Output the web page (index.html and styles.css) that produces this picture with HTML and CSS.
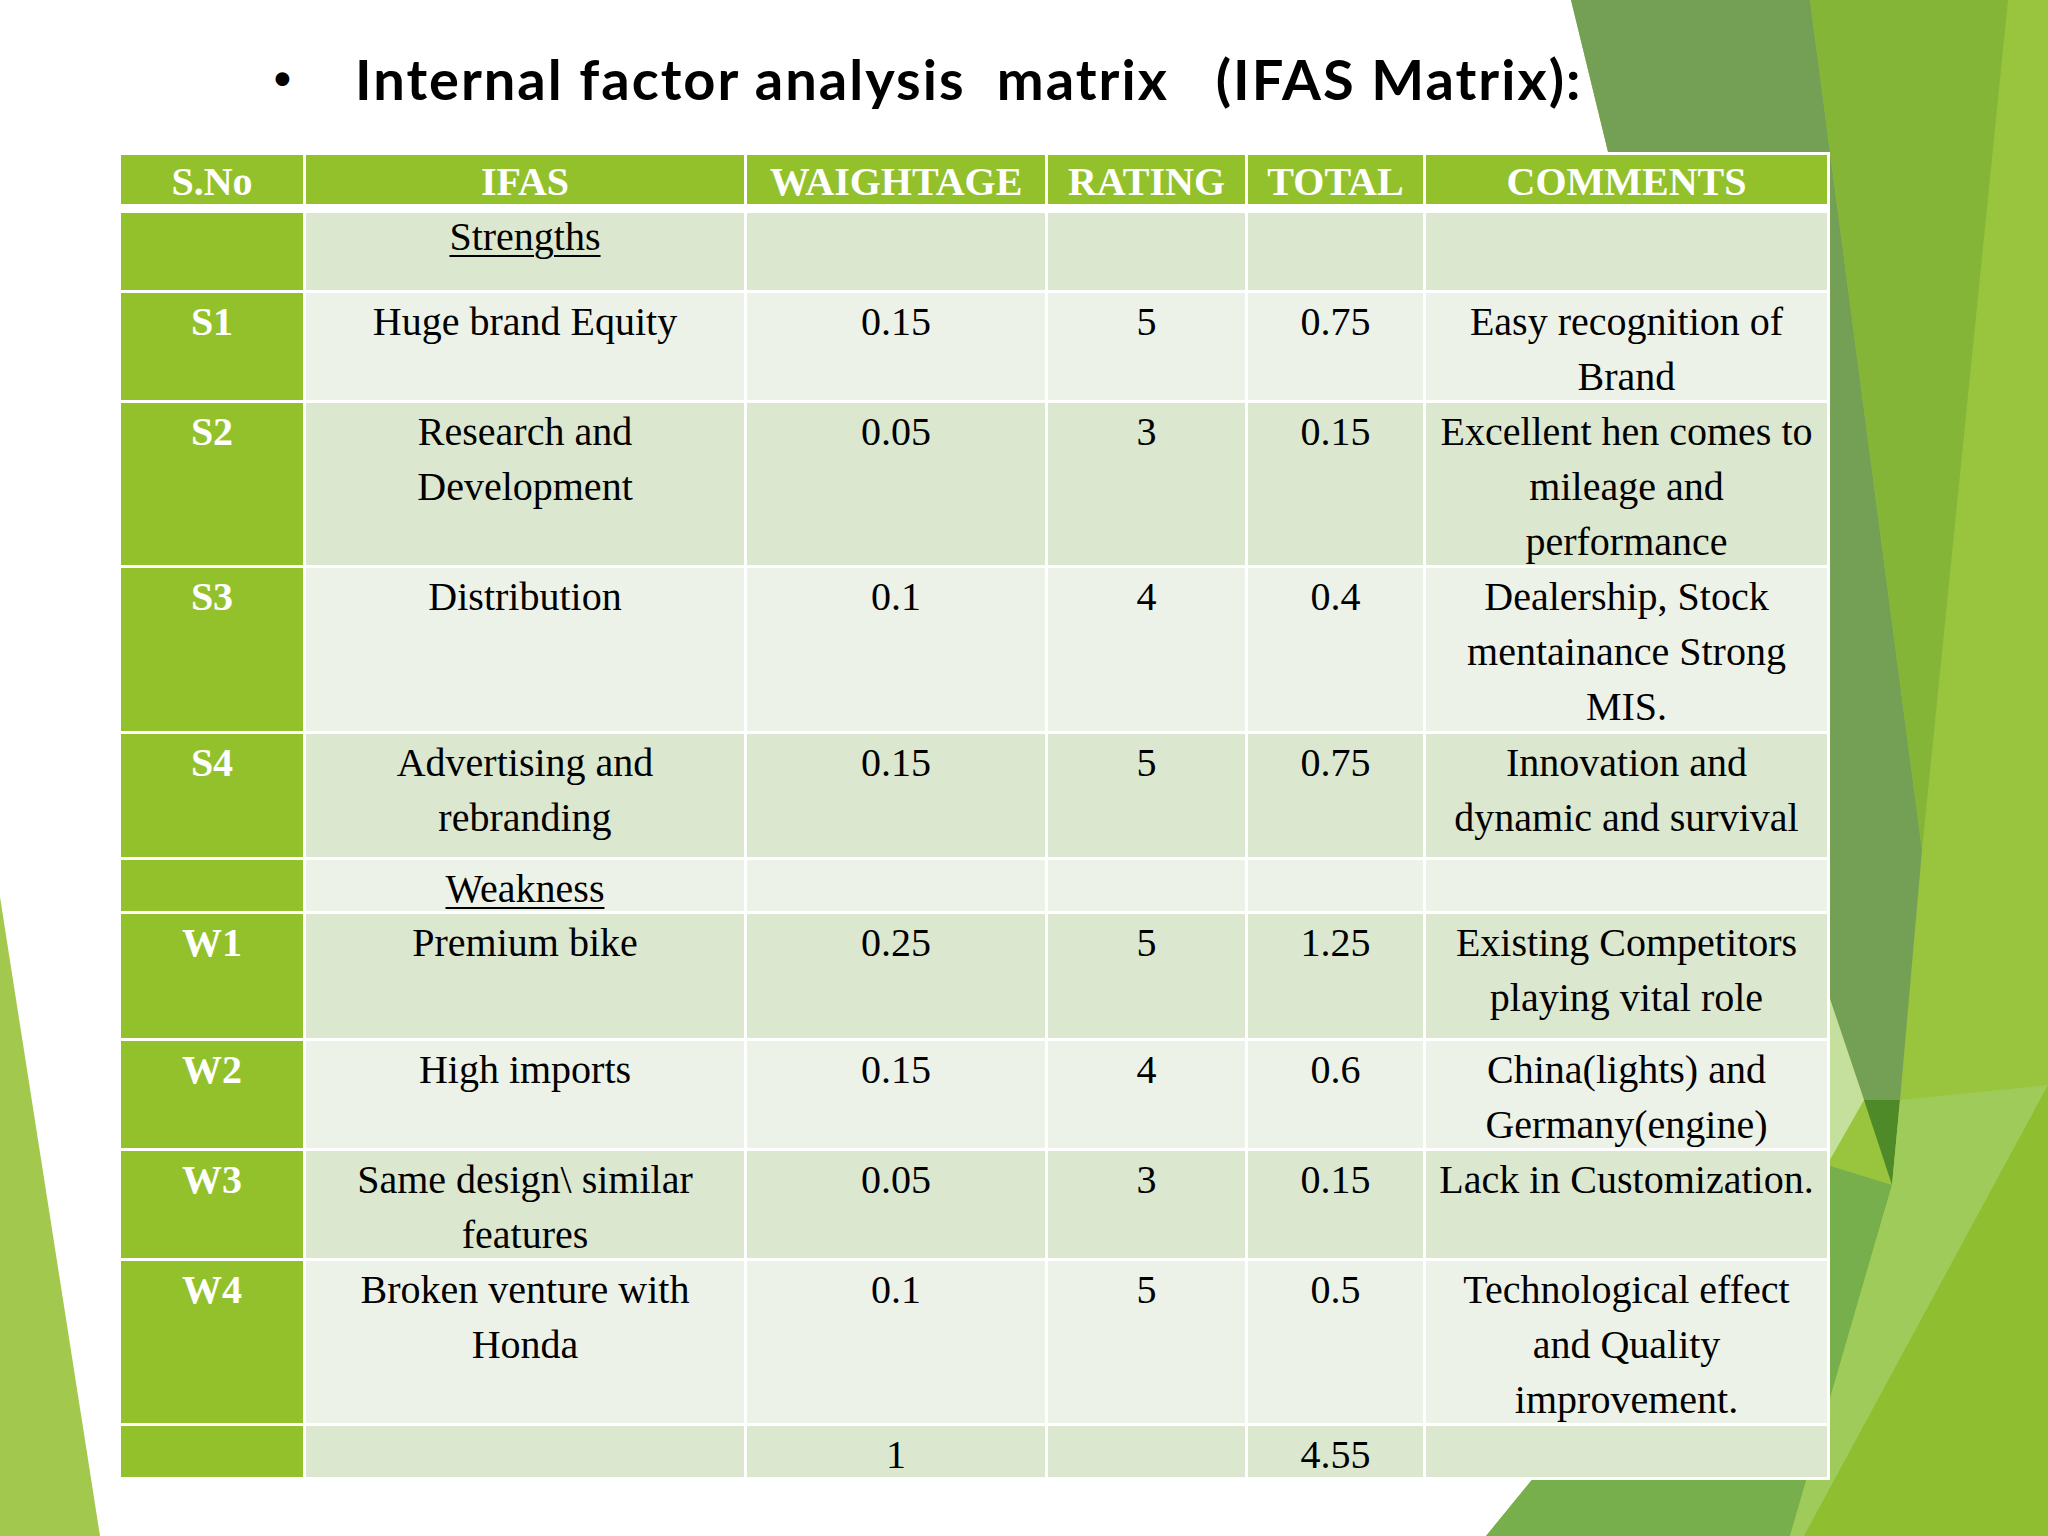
FILE: index.html
```html
<!DOCTYPE html>
<html lang="en">
<head>
    <meta charset="UTF-8">
    <meta name="viewport" content="width=device-width, initial-scale=1.0">
    <title>IFAS Matrix</title>
    <link rel="stylesheet" href="styles.css">
</head>
<body>
    <div class="slide">
        <!-- facet background of the slide theme -->
        <svg class="facets" viewBox="0 0 2048 1536" preserveAspectRatio="none">
            <polygon points="0,897 100,1536 0,1536" fill="#a3c84e"/>
            <polygon points="1571,0 2048,0 2048,1536 1486,1536 1540,1470 1610,160" fill="#98c43e"/>
            <polygon points="1571,0 1810,0 1922,850 1900,1100 1864,1100 1827,990 1610,160" fill="#74a056"/>
            <polygon points="1810,0 2008,0 1922,850" fill="#84b536"/>
            <polygon points="1827,990 1864,1100 1827,1165" fill="#c5df9c"/>
            <polygon points="1864,1100 1900,1100 1892,1185" fill="#4e8a27"/>
            <polygon points="1486,1536 1540,1470 1827,1165 1892,1185 1790,1536" fill="#76af4b"/>
            <polygon points="1892,1185 1900,1100 2048,1085 1804,1536 1790,1536" fill="#9fcb5b"/>
            <polygon points="1804,1536 2048,1085 2048,1536" fill="#8fbf30"/>
        </svg>

        <h1 class="title">
            <span class="bullet">•</span>
            <span class="title-text">Internal factor analysis  matrix   (IFAS Matrix):</span>
        </h1>

        <div class="matrix">
            <div class="grid head">
                <div class="cell">S.No</div>
                <div class="cell">IFAS</div>
                <div class="cell">WAIGHTAGE</div>
                <div class="cell">RATING</div>
                <div class="cell">TOTAL</div>
                <div class="cell">COMMENTS</div>
            </div>
            <div class="grid body">
                <div class="row dark">
                    <div class="cell num"></div>
                    <div class="cell section first"><u>Strengths</u></div>
                    <div class="cell"></div>
                    <div class="cell"></div>
                    <div class="cell"></div>
                    <div class="cell"></div>
                </div>
                <div class="row light">
                    <div class="cell num">S1</div>
                    <div class="cell">Huge brand Equity</div>
                    <div class="cell">0.15</div>
                    <div class="cell">5</div>
                    <div class="cell">0.75</div>
                    <div class="cell">Easy recognition of Brand</div>
                </div>
                <div class="row dark">
                    <div class="cell num">S2</div>
                    <div class="cell">Research and Development</div>
                    <div class="cell">0.05</div>
                    <div class="cell">3</div>
                    <div class="cell">0.15</div>
                    <div class="cell">Excellent hen comes to mileage and performance</div>
                </div>
                <div class="row light">
                    <div class="cell num">S3</div>
                    <div class="cell">Distribution</div>
                    <div class="cell">0.1</div>
                    <div class="cell">4</div>
                    <div class="cell">0.4</div>
                    <div class="cell">Dealership, Stock mentainance Strong MIS.</div>
                </div>
                <div class="row dark">
                    <div class="cell num">S4</div>
                    <div class="cell">Advertising and rebranding</div>
                    <div class="cell">0.15</div>
                    <div class="cell">5</div>
                    <div class="cell">0.75</div>
                    <div class="cell">Innovation and dynamic and survival</div>
                </div>
                <div class="row light">
                    <div class="cell num"></div>
                    <div class="cell section"><u>Weakness</u></div>
                    <div class="cell"></div>
                    <div class="cell"></div>
                    <div class="cell"></div>
                    <div class="cell"></div>
                </div>
                <div class="row dark">
                    <div class="cell num">W1</div>
                    <div class="cell">Premium bike</div>
                    <div class="cell">0.25</div>
                    <div class="cell">5</div>
                    <div class="cell">1.25</div>
                    <div class="cell">Existing Competitors playing vital role</div>
                </div>
                <div class="row light">
                    <div class="cell num">W2</div>
                    <div class="cell">High imports</div>
                    <div class="cell">0.15</div>
                    <div class="cell">4</div>
                    <div class="cell">0.6</div>
                    <div class="cell">China(lights) and Germany(engine)</div>
                </div>
                <div class="row dark">
                    <div class="cell num">W3</div>
                    <div class="cell">Same design\ similar features</div>
                    <div class="cell">0.05</div>
                    <div class="cell">3</div>
                    <div class="cell">0.15</div>
                    <div class="cell">Lack in Customization.</div>
                </div>
                <div class="row light">
                    <div class="cell num">W4</div>
                    <div class="cell">Broken venture with Honda</div>
                    <div class="cell">0.1</div>
                    <div class="cell">5</div>
                    <div class="cell">0.5</div>
                    <div class="cell">Technological effect and Quality improvement.</div>
                </div>
                <div class="row dark">
                    <div class="cell num"></div>
                    <div class="cell"></div>
                    <div class="cell">1</div>
                    <div class="cell"></div>
                    <div class="cell">4.55</div>
                    <div class="cell"></div>
                </div>
            </div>
        </div>
    </div>
</body>
</html>
```

FILE: styles.css
```css
:root {
    --green: #93c12b;
    --row-light: #edf2e9;
    --row-dark: #dce7cf;
    --cols: 182px 438px 298px 197px 175px 401px;
}

body {
    margin: 0;
    background: #fff;
}

.slide {
    position: relative;
    width: 2048px;
    height: 1536px;
    overflow: hidden;
    background: #fff;
}

.facets {
    position: absolute;
    top: 0;
    left: 0;
    width: 2048px;
    height: 1536px;
    z-index: 0;
}

.title {
    position: relative;
    z-index: 1;
    display: flex;
    align-items: center;
    margin: 45px 0 0;
    padding-left: 274px;
    height: 67px;
    font-family: "Lato", "Open Sans", sans-serif;
    font-weight: 700;
    font-size: 56px;
    line-height: 67px;
    color: #000;
}

.bullet {
    font-family: "Liberation Sans", sans-serif;
    font-size: 48px;
    width: 81px;
}

.title-text {
    white-space: pre;
    letter-spacing: 2px;
}

.matrix {
    position: relative;
    z-index: 1;
    width: fit-content;
    margin: 40px 0 0 118px;
    padding: 3px;
    background: #fff;
}

.grid {
    display: grid;
    grid-template-columns: var(--cols);
    column-gap: 3px;
}

.head {
    grid-template-rows: 49px;
    margin-bottom: 9px;
}

.body {
    grid-template-rows: 77px 107px 162px 163px 123px 51px 124px 107px 107px 162px 51px;
    row-gap: 3px;
}

.row {
    display: contents;
}

.cell {
    box-sizing: border-box;
    padding: 1px 10px 0;
    font-family: "Liberation Serif", "Times New Roman", serif;
    font-size: 40px;
    line-height: 55px;
    text-align: center;
    color: #000;
}

.head .cell {
    background: var(--green);
    color: #fff;
    font-weight: 700;
    line-height: 49px;
    padding-top: 2px;
    padding-left: 0;
    padding-right: 0;
}

.row.light .cell {
    background: var(--row-light);
}

.row.dark .cell {
    background: var(--row-dark);
}

.row .cell.num {
    background: var(--green);
    color: #fff;
    font-weight: 700;
}

.cell.section.first {
    padding-top: 0;
    line-height: 47px;
}

.cell u {
    text-underline-offset: 5px;
    text-decoration-thickness: 2px;
}
```
